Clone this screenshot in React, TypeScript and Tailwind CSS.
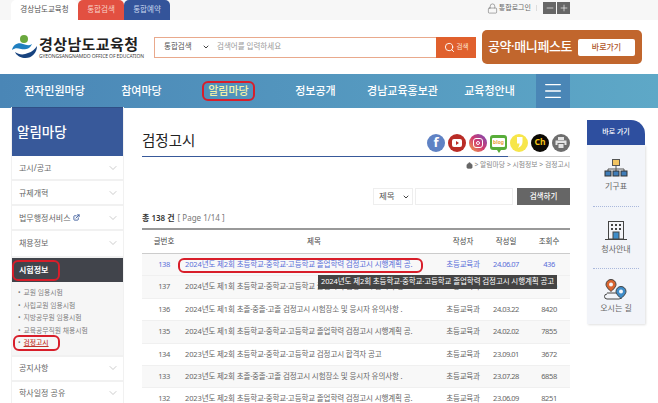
import { ChevronDown, Search, Home, Menu, ExternalLink, Minus, Plus, Lock } from "lucide-react"

const font = "font-['Noto_Sans','Noto_Sans_CJK_KR',sans-serif]"

const navItems = ["전자민원마당", "참여마당", "알림마당", "정보공개", "경남교육홍보관", "교육청안내"]

const rows = [
  { no: "138", title: "2024년도 제2회 초등학교·중학교·고등학교 졸업학력 검정고시 시행계획 공.", date: "24.06.07", views: "436", on: true },
  { no: "137", title: "2024년도 제1회 초등학교·중학교·고등학교 졸업학력 검정고시 합격자 공고", date: "24.05.10", views: "5120", shade: true },
  { no: "136", title: "2024년도 제1회 초졸·중졸·고졸 검정고시 시험장소 및 응시자 유의사항 .", date: "24.03.22", views: "8420" },
  { no: "135", title: "2024년도 제1회 초등학교·중학교·고등학교 졸업학력 검정고시 시행계획 공.", date: "24.02.02", views: "7855", shade: true },
  { no: "134", title: "2023년도 제2회 초등학교·중학교·고등학교 검정고시 합격자 공고", date: "23.09.01", views: "3672" },
  { no: "133", title: "2023년도 제2회 초졸·중졸·고졸 검정고시 시험장소 및 응시자 유의사항 .", date: "23.07.28", views: "6858", shade: true },
  { no: "132", title: "2023년도 제2회 초등학교·중학교·고등학교 졸업학력 검정고시 시행계획 공.", date: "23.06.09", views: "8251" },
]

function SideItem({ label, link, tall }: { label: string; link?: boolean; tall?: boolean }) {
  return (
    <div className={`flex items-center justify-between border-b-2 border-[#f1f1f1] pl-[7px] pr-[4px] text-[8px] text-[#666] ${tall ? "h-[26.5px]" : "h-[25px]"}`}>
      <span className="flex items-center gap-[2px]">
        {label}
        {link && <ExternalLink size={7} strokeWidth={3} className="text-[#3b5a9a]" />}
      </span>
      <ChevronDown size={12} strokeWidth={1} className="text-[#999]" />
    </div>
  )
}

function SocialIcons() {
  return (
    <div className="mt-[4px] flex items-center gap-[3px]">
      <div className="flex h-[18px] w-[18px] items-center justify-center rounded-full bg-[#5f82c4] text-[13px] font-bold leading-none text-white">f</div>
      <div className="flex h-[18px] w-[18px] items-center justify-center rounded-full bg-[#b92c26]">
        <div className="flex h-[8px] w-[10px] items-center justify-center rounded-[2px] bg-white">
          <div className="h-0 w-0 border-y-[2px] border-l-[3px] border-y-transparent border-l-[#b92c26]" />
        </div>
      </div>
      <div className="flex h-[18px] w-[18px] items-center justify-center rounded-full bg-gradient-to-tr from-[#f0a030] via-[#d0366e] to-[#7440b8]">
        <div className="flex h-[10px] w-[10px] items-center justify-center rounded-[3px] border border-white">
          <div className="h-[4px] w-[4px] rounded-full border border-white" />
        </div>
      </div>
      <div className="relative flex h-[15px] w-[17px] items-center justify-center rounded-[3px] bg-[#58ad3a] text-[5px] font-bold leading-none text-[#e9a13a]">
        <span className="rounded-[1px] bg-white px-[1px] py-[2px]">blog</span>
        <div className="absolute -bottom-[3px] left-[7px] h-0 w-0 border-x-[2px] border-t-[3px] border-x-transparent border-t-[#58ad3a]" />
      </div>
      <div className="flex h-[18px] w-[18px] items-center justify-center rounded-full bg-[#f7e64a]">
        <svg width="7" height="11" viewBox="0 0 7 11">
          <path d="M1 0h5.500v5c0 3-2 5-4.500 6 1-2 1.500-3 1.500-4.500H1z" fill="#fff" />
        </svg>
      </div>
      <div className="flex h-[18px] w-[18px] items-center justify-center rounded-full bg-[#0c0a05] text-[8.5px] font-bold leading-none text-[#f5c518]">Ch</div>
      <div className="flex h-[18px] w-[18px] items-center justify-center rounded-full bg-[#6e6e6e]">
        <svg width="12" height="11" viewBox="0 0 12 11">
          <path d="M3 0h6v3H3zM0.500 3.500h11V8H9.500V6h-7v2H0.500zM3.500 7h5v4h-5z" fill="#e4e4e4" />
        </svg>
      </div>
    </div>
  )
}

function OrgIcon() {
  return (
    <svg width="24" height="18" viewBox="0 0 24 18" fill="none">
      <rect x="8.500" y="0.500" width="7" height="6" fill="#f2c462" stroke="#555" />
      <path d="M12 7v3M4 12v-2h16v2M12 10v2" stroke="#555" />
      <rect x="1" y="12" width="6" height="5" fill="#3f7cb8" stroke="#333" />
      <rect x="9" y="12" width="6" height="5" fill="#3f7cb8" stroke="#333" />
      <rect x="17" y="12" width="6" height="5" fill="#3f7cb8" stroke="#333" />
    </svg>
  )
}

function BuildingIcon() {
  return (
    <svg width="22" height="19" viewBox="0 0 22 19" fill="none">
      <rect x="3.500" y="0.500" width="15" height="17.500" fill="#f4f5f9" stroke="#444" />
      <path d="M0 18.500h22" stroke="#444" />
      <path d="M6 3h2v2H6zM10 3h2v2h-2zM14 3h2v2h-2zM6 7h2v2H6zM10 7h2v2h-2zM14 7h2v2h-2z" fill="#444" />
      <rect x="8" y="11" width="6" height="7" fill="#3f8cc8" stroke="#444" />
    </svg>
  )
}

function MapIcon() {
  return (
    <svg width="26" height="22" viewBox="0 0 26 22" fill="none">
      <path d="M4 14h12a3 3 0 0 1 0 6H4a2.500 2.500 0 0 1 0-5" stroke="#444" />
      <path d="M8 0.500a5 5 0 0 1 5 5c0 3-5 7-5 7s-5-4-5-7a5 5 0 0 1 5-5z" fill="#d9642f" stroke="#444" />
      <circle cx="8" cy="5.500" r="2" fill="#f4f5f9" />
      <path d="M18 7.500a5 5 0 0 1 5 5c0 3-5 7-5 7s-5-4-5-7a5 5 0 0 1 5-5z" fill="#3f8cc8" stroke="#444" />
      <circle cx="18" cy="12.500" r="2" fill="#f4f5f9" />
    </svg>
  )
}

export default function App() {
  return (
    <div className={`${font} h-[403px] w-[658px] overflow-hidden bg-white`}>
      {/* top bar */}
      <div className="flex h-[20px] justify-between bg-[#f7f7f7] pl-[11px] pr-[88px]">
        <div className="flex h-[20px] text-[7.5px] leading-none">
          <div className="flex w-[67px] items-center justify-center rounded-t-[5px] bg-white text-[#555]">경상남도교육청</div>
          <div className="flex w-[46px] items-center justify-center rounded-t-[5px] bg-[#e25041] text-[#f8d0c8]">통합검색</div>
          <div className="flex w-[46px] items-center justify-center rounded-t-[5px] bg-[#34549a] text-[#c8d4ee]">통합예약</div>
        </div>
        <div className="flex h-[16px] items-center text-[7px] text-[#666]">
          <Lock size={11} strokeWidth={1.2} className="mr-[1px]" />
          <span>통합로그인</span>
          <span className="ml-[5px] h-[6px] w-px bg-[#ddd]" />
          <div className="ml-[6px] flex h-[12px] w-[13px] items-center justify-center bg-[#666] text-white"><Minus size={10} strokeWidth={1.5} /></div>
          <div className="ml-[1px] flex h-[12px] w-[13px] items-center justify-center bg-[#666] text-white"><Plus size={10} strokeWidth={1.5} /></div>
        </div>
      </div>

      {/* header */}
      <div className="flex h-[54px] items-center pl-[12px]">
        <div className="flex w-[130px] items-center gap-[2px]">
          <svg width="25" height="24" viewBox="0 0 25 24" className="shrink-0">
            <circle cx="12" cy="4" r="4" fill="#6aa83e" />
            <path d="M0 15c1-5 6-8 11-6 3 1 6 2 9 0-2 5-7 6-11 5-4-1-6-1-9 1z" fill="#1f7fc0" />
            <path d="M25 11c0 7-6 13-13 12-4-.5-8-3-9-6 4 3 9 3 13 1 4-1 7-4 9-7z" fill="#17437f" />
          </svg>
          <div className="flex flex-col leading-none">
            <span className="whitespace-nowrap text-[15px] font-bold leading-[16px] tracking-[0.4px] text-[#222]">경상남도교육청</span>
            <span className="mt-[1px] whitespace-nowrap text-[5px] leading-[6px] tracking-[-0.1px] text-[#444]">GYEONGSANGNAMDO OFFICE OF EDUCATION</span>
          </div>
        </div>
        <div className="ml-[12px] flex h-[21px] w-[322px] border border-[#e9a98c]">
          <div className="flex w-[60px] items-center justify-between pl-[9px] pr-[5px] text-[7.5px] text-[#555]">
            통합검색
            <ChevronDown size={8} strokeWidth={3} className="text-[#444]" />
          </div>
          <div className="flex flex-1 items-center pl-[2px] text-[7.5px] text-[#999]">검색어를 입력하세요</div>
          <div className="-my-px -mr-px flex w-[40px] items-center justify-center gap-[2px] bg-[#e0602d] text-[6.5px] text-[#fbe3d8]">
            <Search size={11} strokeWidth={2} className="text-white" />
            검색
          </div>
        </div>
        <div className="ml-[6px] flex h-[34px] w-[160px] items-center justify-between rounded-[5px] bg-[#c1662d] pl-[6px] pr-[7px]">
          <span className="text-[13px] font-medium tracking-[-0.4px] text-white">공약·매니페스토</span>
          <span className="flex h-[17px] w-[57px] items-center justify-center rounded-[2px] bg-white text-[8px] font-medium text-[#b0552a]">바로가기</span>
        </div>
      </div>

      {/* nav */}
      <div className="flex h-[34px] bg-gradient-to-r from-[#4a86b6] to-[#5ea8c7] pl-[11px] text-[11px] font-medium text-white">
        {navItems.map((n, i) => (
          <div key={n} className={`flex w-[87px] items-center justify-center ${i === 2 ? "text-[#f3f2a8]" : ""}`}>
            <span className={i === 2 ? "relative" : ""}>
              {n}
              {i === 2 && <span className="absolute -inset-x-[6px] -inset-y-[2px] rounded-[6px] border-2 border-[#d81e2a]" />}
            </span>
          </div>
        ))}
        <div className="ml-[3px] flex w-[34px] items-center justify-center bg-[#4a86b6]">
          <Menu size={22} strokeWidth={1.4} />
        </div>
      </div>

      {/* body */}
      <div className="flex pl-[11px]">
        <aside className="-mt-px w-[113px] shrink-0 border-x border-[#f1f1f1]">
          <div className="flex h-[49px] items-center border-t border-[#2f4f86] bg-[#38599a] pl-[5px] text-[13.5px] font-medium text-white">알림마당</div>
          <SideItem label="고시/공고" />
          <SideItem label="규제개혁" />
          <SideItem label="법무행정서비스" link />
          <SideItem label="채용정보" tall />
          <div className="relative flex h-[24px] items-center bg-[#41444b] pl-[7px] text-[8px] font-bold text-white">
            시험정보
            <span className="absolute left-0 top-[2px] h-[21px] w-[48px] rounded-[6px] border-2 border-[#d81e2a]" />
          </div>
          <ul className="flex h-[75px] flex-col justify-center gap-[2.5px] border-b-2 border-[#f1f1f1] bg-[#f6f6f6] pl-[6px] text-[6.8px] leading-[10px] text-[#808080]">
            <li className="flex gap-[3px]"><span>•</span>교원 임용시험</li>
            <li className="flex gap-[3px]"><span>•</span>사립교원 임용시험</li>
            <li className="flex gap-[3px]"><span>•</span>지방공무원 임용시험</li>
            <li className="flex gap-[3px]"><span>•</span>교육공무직원 채용시험</li>
            <li className="relative flex gap-[3px]">
              <span>•</span>
              <span className="font-medium text-[#c2352c] underline">검정고시</span>
              <span className="absolute -top-[3px] left-[-5px] h-[16px] w-[47px] rounded-[6px] border-2 border-[#d81e2a]" />
            </li>
          </ul>
          <SideItem label="공지사항" />
          <SideItem label="학사일정 공유" />
        </aside>

        <main className="ml-[18px] w-[428px] shrink-0">
          <div className="relative flex h-[49px] items-center justify-between border-b border-[#ccc] pt-[17px]">
            <h1 className="text-[14.5px] text-[#222]">검정고시</h1>
            <SocialIcons />
            <div className="absolute -bottom-px left-0 h-px w-[366px] bg-[#38599a]" />
          </div>
          <div className="flex h-[17px] items-center justify-end gap-[1px] text-[6.8px] text-[#888]">
            <Home size={7} fill="#666" className="text-[#666]" />
            <span>&gt; 알림마당 &gt; 시험정보 &gt; 검정고시</span>
          </div>
          <div className="mt-[14px] flex h-[17px] items-center justify-end">
            <div className="flex h-[17px] w-[40px] items-center justify-between border border-[#eee] pl-[5px] pr-[2px] text-[8.5px] text-[#555]">
              제목
              <ChevronDown size={8} strokeWidth={3} className="text-[#444]" />
            </div>
            <div className="ml-[2px] h-[17px] w-[98px] border border-[#eee]" />
            <div className="ml-[4px] flex h-[17px] w-[53px] items-center justify-center bg-[#666] text-[7.5px] font-medium text-white">검색하기</div>
          </div>
          <div className="mt-[5px] flex h-[16px] items-center text-[8px] font-semibold text-[#333]">
            총 138 건 <span className="ml-[3px] font-normal text-[#777]">[ Page 1/14 ]</span>
          </div>
          <div className="mt-[2px] border-t-2 border-[#999]" />
          <div className="relative">
            <div className="grid h-[24px] grid-cols-[44px_256px_42px_44px_42px] items-center border-b border-[#ccc] text-center text-[7.5px] text-[#444]">
              <span>글번호</span>
              <span>제목</span>
              <span>작성자</span>
              <span>작성일</span>
              <span>조회수</span>
            </div>
            {rows.map((r) => (
              <div
                key={r.no}
                className={`grid h-[22.4px] grid-cols-[44px_256px_42px_44px_42px] items-center border-b border-[#f0f0f0] text-center text-[7.5px] ${r.on ? "text-[#5a6fd8]" : "text-[#666]"} ${r.on || r.shade ? "bg-[#f8f8f8]" : ""}`}
              >
                <span className="tracking-[-0.4px]">{r.no}</span>
                <span className="-ml-px whitespace-nowrap text-left tracking-[-0.12px]">{r.title}</span>
                <span className="tracking-[-0.2px]">초등교육과</span>
                <span className="tracking-[-0.5px]">{r.date}</span>
                <span className="tracking-[-0.4px]">{r.views}</span>
              </div>
            ))}
            <span className="absolute left-[36px] top-[28px] h-[15px] w-[245px] rounded-[6px] border-2 border-[#d81e2a]" />
            <div className="absolute left-[176px] top-[45px] flex h-[14px] w-[239px] items-center justify-center whitespace-nowrap bg-[#444] text-[7.5px] tracking-[-0.1px] text-white">
              2024년도 제2회 초등학교·중학교·고등학교 졸업학력 검정고시 시행계획 공고
            </div>
          </div>
        </main>

        <aside className="ml-[17px] w-[58px] shrink-0">
          <div className="mt-[12px] flex h-[25px] items-center justify-center rounded-tr-[14px] bg-[#2e4f9f] text-[7px] font-medium text-white">바로 가기</div>
          <div className="flex h-[179px] flex-col items-center bg-[#f2f4f9] text-[8px] text-[#666] shadow-[1px_1px_2px_rgba(0,0,0,0.12)]">
            <div className="flex h-[62px] w-[46px] flex-col items-center justify-center gap-[3px] border-b border-dotted border-[#aab8dc]">
              <OrgIcon />
              기구표
            </div>
            <div className="flex h-[62px] w-[46px] flex-col items-center justify-center gap-[3px] border-b border-dotted border-[#aab8dc]">
              <BuildingIcon />
              청사안내
            </div>
            <div className="flex h-[55px] flex-col items-center justify-center gap-[1px]">
              <MapIcon />
              오시는 길
            </div>
          </div>
        </aside>
      </div>
    </div>
  )
}
